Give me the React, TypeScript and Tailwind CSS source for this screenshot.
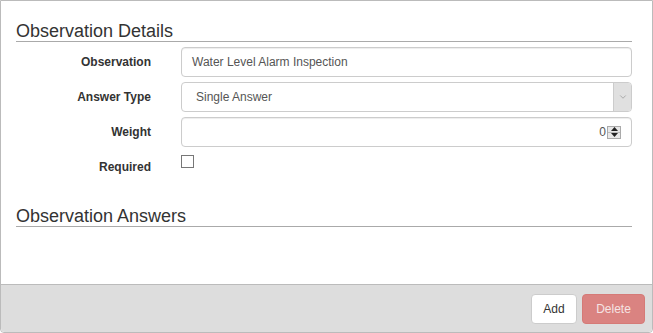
import { ChevronDown } from "lucide-react";

const font = { fontFamily: '"Liberation Sans", Arial, sans-serif' };

function Label({ children, className = "" }: { children: string; className?: string }) {
  return (
    <div className={`w-[135px] shrink-0 text-right text-[12px] font-bold text-[#333] ${className}`}>{children}</div>
  );
}

export default function App() {
  return (
    <div style={font} className="flex h-[333px] w-[653px] flex-col rounded-b-[4px] border border-[#bbb] bg-white">
      <div className="flex-1 pl-[15px] pr-[20px]">
        {/* Details */}
        <h2 className="mt-[20px] h-[21px] border-b border-[#aaa] text-[18px] leading-[20px] text-[#333]">
          Observation Details
        </h2>

        <div className="mt-[5px] flex flex-col gap-[5px]">
          <div className="flex h-[30px] items-center gap-[30px]">
            <Label>Observation</Label>
            <div className="flex h-full flex-1 items-center rounded-[4px] border border-[#ccc] pl-[10px] text-[12px] text-[#555] shadow-[inset_0_1px_1px_rgba(0,0,0,0.075)]">
              Water Level Alarm Inspection
            </div>
          </div>

          <div className="flex h-[30px] items-center gap-[30px]">
            <Label>Answer Type</Label>
            <div className="flex h-full flex-1 items-center overflow-hidden rounded-[4px] border border-[#ccc] text-[12px] text-[#555]">
              <span className="flex-1 pl-[14px]">Single Answer</span>
              <span className="flex h-full w-[18px] items-center justify-center border-l border-[#ccc] bg-[#e0e0e0]">
                <ChevronDown className="h-[10px] w-[10px] text-[#888]" strokeWidth={1.5} />
              </span>
            </div>
          </div>

          <div className="flex h-[30px] items-center gap-[30px]">
            <Label>Weight</Label>
            <div className="flex h-full flex-1 items-center justify-end gap-[1px] rounded-[4px] border border-[#ccc] pr-[10px] text-[12px] text-[#555] shadow-[inset_0_1px_1px_rgba(0,0,0,0.075)]">
              <span>0</span>
              <span className="flex h-[13px] w-[14px] flex-col border border-[#aaa] bg-[#e8e8e8]">
                <span className="flex flex-1 items-center justify-center border-b border-[#bbb]">
                  <svg width="7" height="4" viewBox="0 0 7 4"><path d="M0 4 L3.5 0 L7 4Z" fill="#222" /></svg>
                </span>
                <span className="flex flex-1 items-center justify-center">
                  <svg width="7" height="4" viewBox="0 0 7 4"><path d="M0 0 L3.5 4 L7 0Z" fill="#222" /></svg>
                </span>
              </span>
            </div>
          </div>

          <div className="flex h-[22px] items-start gap-[30px]">
            <Label className="pt-[8px] leading-[14px]">Required</Label>
            <span className="mt-[3px] h-[13px] w-[13px] border border-[#777] bg-white" />
          </div>
        </div>

        {/* Answers */}
        <h2 className="mt-[32px] h-[21px] border-b border-[#aaa] text-[18px] leading-[20px] text-[#333]">
          Observation Answers
        </h2>
      </div>

      <div className="flex h-[48px] items-center justify-end gap-[5px] rounded-b-[4px] border-t border-[#bbb] bg-[#dddddd] pr-[7px] pt-[1px]">
        <button className="h-[30px] w-[46px] rounded-[4px] border border-[#ccc] bg-white text-[12px] text-[#333]">
          Add
        </button>
        <button className="h-[30px] w-[63px] rounded-[4px] border border-[#d57a77] bg-[#da8381] text-[12px] text-[#f5e4e3]">
          Delete
        </button>
      </div>
    </div>
  );
}
